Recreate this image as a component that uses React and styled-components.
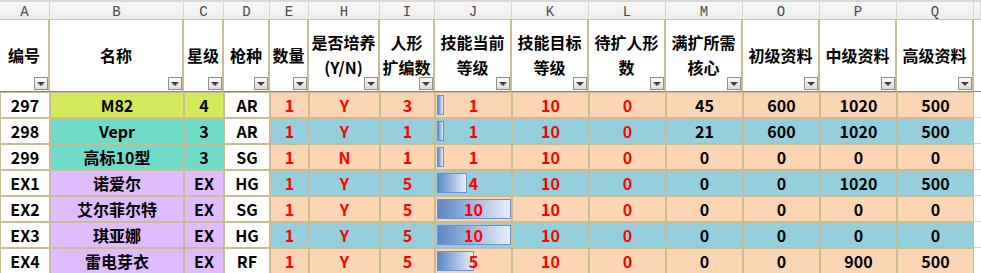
import React from 'react';
import styled, { createGlobalStyle } from 'styled-components';

const Global = createGlobalStyle`
  html, body { margin: 0; padding: 0; background: #fff; }
  body { font-family: "Noto Sans CJK SC", "Noto Sans", sans-serif; }
  * { box-sizing: border-box; }
`;

const COLS = '50px 134px 40px 46px 39px 71px 55px 77px 77px 77px 77px 77px 77px 77px 1fr';

const TAN = '#c9bc95';
const PEACH = '#fcd5b4';
const BLUE = '#95cfdd';
const LIME = '#d3e85b';
const TEAL = '#6edcc8';
const LAV = '#e0bbfd';

const Sheet = styled.div`
  display: grid;
  grid-template-columns: ${COLS};
  grid-template-rows: 20px 72px repeat(7, 26px);
  width: 981px;
  height: 273px;
  overflow: hidden;
  background: #fff;
`;

const ColLetter = styled.div`
  display: flex;
  align-items: center;
  justify-content: center;
  padding-top: 3px;
  background: linear-gradient(#f8f8f8, #ededed);
  border-top: 2px solid #d9d9d9;
  border-bottom: 1px solid #c4c4c4;
  border-right: 1px solid #d6d6d6;
  font-family: "Liberation Mono", "DejaVu Sans Mono", monospace;
  font-size: 14px;
  color: #4a4a4a;
`;

const HeaderCell = styled.div`
  position: relative;
  display: flex;
  align-items: center;
  justify-content: center;
  text-align: center;
  background: #fff;
  border-right: ${p => (p.$filler ? 'none' : `2px solid ${TAN}`)};
  border-bottom: 1px solid #5ea83c;
  font-weight: 700;
  font-size: 16px;
  line-height: 25px;
  color: #000;
  white-space: nowrap;
  padding-bottom: 1px;
`;

const FilterButton = styled.span`
  position: absolute;
  right: 0;
  bottom: 1px;
  width: 14px;
  height: 13px;
  border: 1px solid #8e8e8e;
  background: linear-gradient(#fbfbfb, #dcdcdc);
  display: flex;
  align-items: center;
  justify-content: center;
  &::after {
    content: '';
    width: 0;
    height: 0;
    border-left: 4px solid transparent;
    border-right: 4px solid transparent;
    border-top: 4px solid #404040;
  }
`;

const DataCell = styled.div`
  position: relative;
  display: flex;
  align-items: center;
  justify-content: center;
  background: ${p => p.$bg || '#fff'};
  border: 1px solid ${TAN};
  font-weight: 700;
  font-size: 16px;
  color: ${p => (p.$red ? '#ff0000' : '#000')};
  white-space: nowrap;
`;

const FillerCell = styled.div`
  background: #fff;
  border-bottom: 1px solid #d6d6d6;
`;

const DataBar = styled.span`
  position: absolute;
  left: 1px;
  top: 2px;
  bottom: 2px;
  background: linear-gradient(to right, #5d87c7, #e8eef9);
  border: 1px solid #6a90cf;
`;

const CellText = styled.span`
  position: relative;
`;

const letters = ['A', 'B', 'C', 'D', 'E', 'H', 'I', 'J', 'K', 'L', 'M', 'O', 'P', 'Q', ''];

const headers = [
  ['编号'],
  ['名称'],
  ['星级'],
  ['枪种'],
  ['数量'],
  ['是否培养', '(Y/N)'],
  ['人形', '扩编数'],
  ['技能当前', '等级'],
  ['技能目标', '等级'],
  ['待扩人形', '数'],
  ['满扩所需', '核心'],
  ['初级资料'],
  ['中级资料'],
  ['高级资料'],
];

const rows = [
  { id: '297', name: 'M82', star: '4', type: 'AR', nb: LIME, e: '1', h: 'Y', i: '3', j: 1, k: '10', l: '0', m: '45', o: '600', p: '1020', q: '500' },
  { id: '298', name: 'Vepr', star: '3', type: 'AR', nb: TEAL, e: '1', h: 'Y', i: '1', j: 1, k: '10', l: '0', m: '21', o: '600', p: '1020', q: '500' },
  { id: '299', name: '高标10型', star: '3', type: 'SG', nb: TEAL, e: '1', h: 'N', i: '1', j: 1, k: '10', l: '0', m: '0', o: '0', p: '0', q: '0' },
  { id: 'EX1', name: '诺爱尔', star: 'EX', type: 'HG', nb: LAV, e: '1', h: 'Y', i: '5', j: 4, k: '10', l: '0', m: '0', o: '0', p: '1020', q: '500' },
  { id: 'EX2', name: '艾尔菲尔特', star: 'EX', type: 'SG', nb: LAV, e: '1', h: 'Y', i: '5', j: 10, k: '10', l: '0', m: '0', o: '0', p: '0', q: '0' },
  { id: 'EX3', name: '琪亚娜', star: 'EX', type: 'HG', nb: LAV, e: '1', h: 'Y', i: '5', j: 10, k: '10', l: '0', m: '0', o: '0', p: '0', q: '0' },
  { id: 'EX4', name: '雷电芽衣', star: 'EX', type: 'RF', nb: LAV, e: '1', h: 'Y', i: '5', j: 5, k: '10', l: '0', m: '0', o: '0', p: '900', q: '500' },
];

const BAR_FULL = 74;

export default function App() {
  return (
    <>
      <Global />
      <Sheet>
        {letters.map((l, idx) => (
          <ColLetter key={'l' + idx}>{l}</ColLetter>
        ))}
        {headers.map((lines, idx) => (
          <HeaderCell key={'h' + idx}>
            <div>
              {lines.map((ln, k) => (
                <div key={k}>{ln}</div>
              ))}
            </div>
            <FilterButton />
          </HeaderCell>
        ))}
        <HeaderCell $filler />
        {rows.map((r, ri) => {
          const band = ri % 2 === 0 ? PEACH : BLUE;
          return (
            <React.Fragment key={r.id}>
              <DataCell>{r.id}</DataCell>
              <DataCell $bg={r.nb}>{r.name}</DataCell>
              <DataCell $bg={r.nb}>{r.star}</DataCell>
              <DataCell>{r.type}</DataCell>
              <DataCell $bg={band} $red>{r.e}</DataCell>
              <DataCell $bg={band} $red>{r.h}</DataCell>
              <DataCell $bg={band} $red>{r.i}</DataCell>
              <DataCell $bg={band} $red>
                <DataBar style={{ width: Math.round((r.j / 10) * BAR_FULL) }} />
                <CellText>{r.j}</CellText>
              </DataCell>
              <DataCell $bg={band} $red>{r.k}</DataCell>
              <DataCell $bg={band} $red>{r.l}</DataCell>
              <DataCell $bg={band}>{r.m}</DataCell>
              <DataCell $bg={band}>{r.o}</DataCell>
              <DataCell $bg={band}>{r.p}</DataCell>
              <DataCell $bg={band}>{r.q}</DataCell>
              <FillerCell />
            </React.Fragment>
          );
        })}
      </Sheet>
    </>
  );
}
